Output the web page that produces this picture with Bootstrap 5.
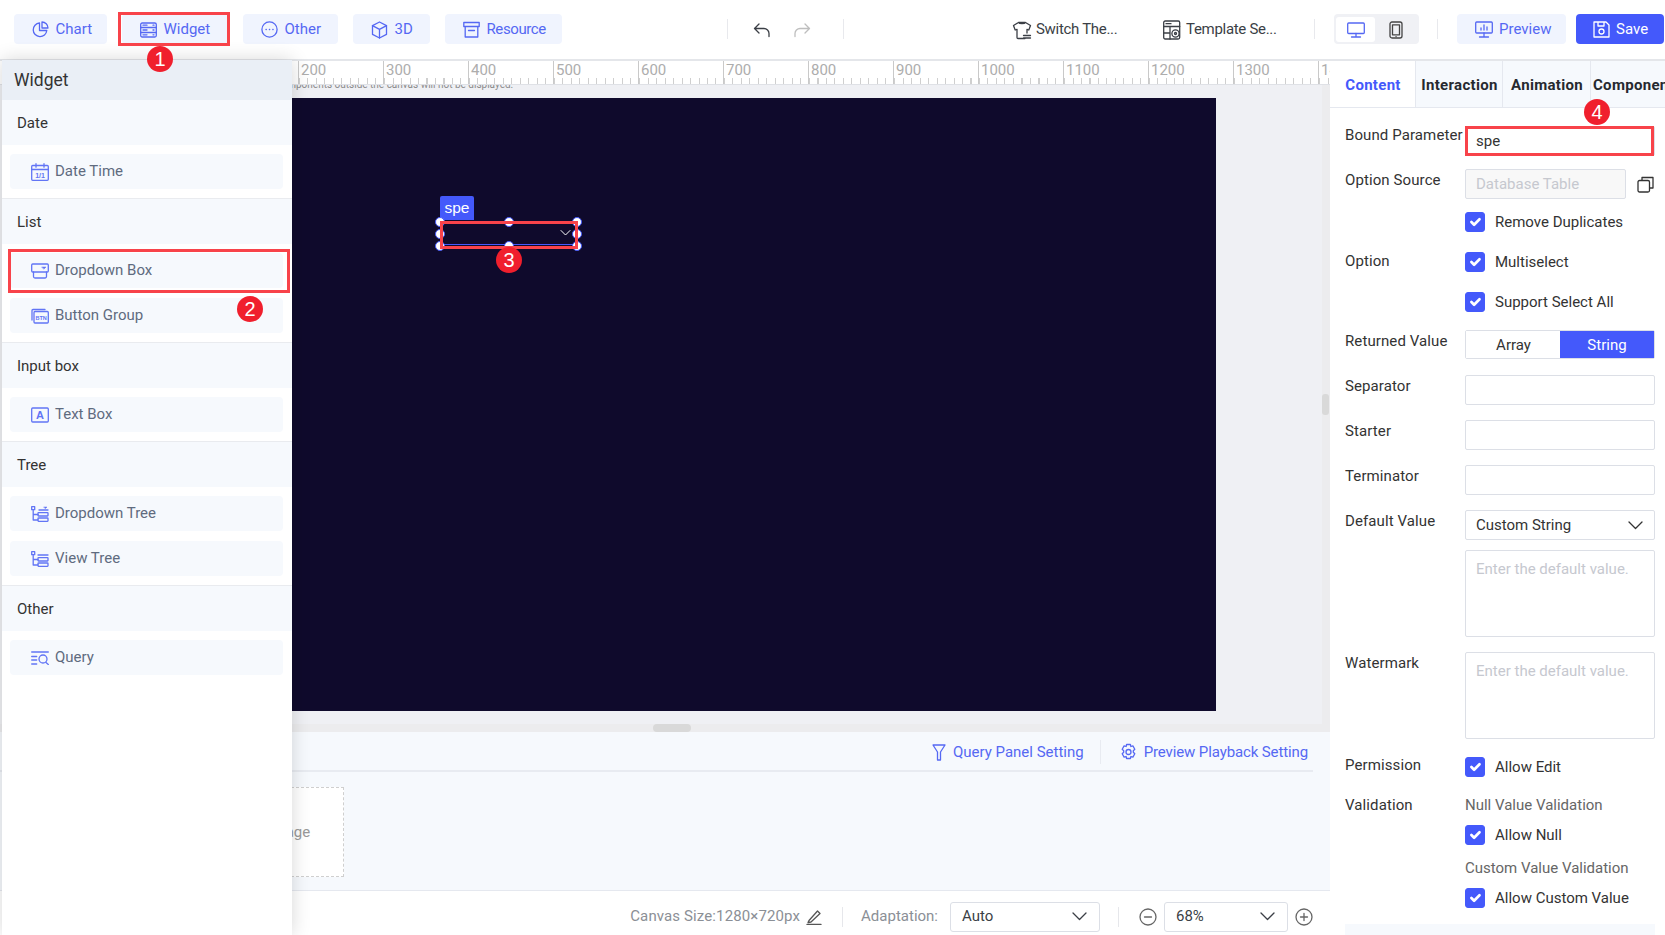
<!DOCTYPE html>
<html lang="en"><head><meta charset="utf-8"><title>Widget editor</title>
<link href="https://cdn.jsdelivr.net/npm/bootstrap@5.3.0/dist/css/bootstrap.min.css" rel="stylesheet">
<style>
html,body{margin:0;height:100%;overflow:hidden;background:#fff}
body{font-family:Roboto,"Liberation Sans",sans-serif;font-size:15px;color:#3b3f46}
svg{display:block;flex:none;fill:none;stroke:currentColor;stroke-width:1.3;stroke-linecap:round;stroke-linejoin:round}
svg text{fill:currentColor;stroke:none;font-family:"Liberation Sans",sans-serif;font-weight:700}
.ed-app{width:1665px;height:935px;position:relative;overflow:hidden}
.ed-top{height:61px;border-bottom:2px solid #e4e6ea;padding:14px 0 0 14px;background:#fff}
.ed-tb{height:30px;padding:1px 0 0 18px;background:#f0f4fe;border:0;border-radius:4px;color:#5568f3;display:flex;align-items:center;gap:6.5px;font-size:15px;white-space:nowrap}
.w-chart{width:93px}.w-widget{width:106px;margin-left:15px}.w-other{width:95px;margin-left:15px}.w-3d{width:77px;margin-left:15px}.w-res{width:117px;margin-left:15px;letter-spacing:-.4px}
.ed-sep{width:1px;height:20px;background:#e8e9ed;margin-top:5px;flex:none}
.m165{margin-left:165px}.m25{margin-left:25px}.m22{margin-left:22px}.m32{margin-left:32px}.m168{margin-left:168px}.m19{margin-left:19px}.m18{margin-left:18px}
.ed-ic{height:30px;padding-top:1px;display:flex;align-items:center;gap:5px;color:#3b3f46;white-space:nowrap;letter-spacing:-.3px;flex:none}
.ic-switch{width:151px;gap:4px}.ic-tpl{width:133px}
.ed-dev{width:85px;height:30px;background:#f0f1f5;border-radius:4px;padding:3px 2px;display:flex;flex:none}
.ed-dev span{width:40px;height:25px;border-radius:3px;display:flex;align-items:center;justify-content:center}
.ed-dev .on{background:#fff;color:#5568f3}.ed-dev .off{width:43px;color:#444}
.ed-prev{width:109px;padding-left:18px;gap:6px;flex:none}
.ed-save{width:88px;margin-left:10px;padding-left:17px;gap:6px;background:#4459fb;color:#fff;flex:none}
.ed-main{height:874px}
.ed-center{width:1330px;height:874px}
.ed-ruler{height:24px;flex:none;background:#fff;border-bottom:1px solid #dfe1e6;padding-left:128px;overflow:hidden}
.ed-cell{width:85px;flex:none;height:23px;border-left:1px solid #c9c9c9;color:#adadad;font-size:15px;line-height:19px;padding-left:2px;background:repeating-linear-gradient(90deg,#cfcfcf 0 1px,transparent 1px 8.5px) left bottom/100% 6px no-repeat}
.ed-stage{height:639px;background:#eff0f4;flex:none}
.ed-scroll{flex:1;overflow:hidden;position:relative}
.ed-note{height:19px;margin-top:-6px;margin-left:275px;font-size:10px;line-height:11px;color:#8a8a8a;white-space:nowrap}
.ed-canvas{width:1088px;height:613px;margin-left:128px;background:#0f0a2c;position:relative}
.ed-vbar{width:8px;background:#ececee;position:relative}
.ed-vthumb{width:7px;height:21px;background:#d9d9d9;border-radius:3px;margin-top:309px}
.ed-hbar{height:8px;background:#ececee;flex:none}
.ed-hthumb{width:38px;height:8px;background:#d9d9d9;border-radius:4px;margin-left:653px}
.ed-qp{height:159px;background:#f6f9fd;flex:none;border-bottom:1px solid #e5e8ef}
.ed-qhead{height:40px;margin-right:17px;border-bottom:2px solid #e8ebf1;padding:2px 5px 0 0;color:#5568f3;gap:7px;white-space:nowrap}
.ed-qsep{width:1px;height:24px;background:#e8ebf1;margin:0 12px 0 9px}
.ls-pp{letter-spacing:-.12px}
.ed-thumb{width:128px;height:90px;margin:15px 0 0 216px;padding-right:4px;background:#fff;border:1px dashed #cfcfcf;color:#999;display:flex;align-items:center;justify-content:center}
.ed-foot{height:44px;flex:none;padding:7px 17px 0 0;color:#8b8f96;background:#fff;white-space:nowrap}
.ed-fsep{width:1px;height:20px;background:#e6e7eb}
.fsep1{margin:0 18px 0 20px}.fsep2{margin:0 20px 0 18px}
.ed-cs{letter-spacing:.12px}
.ed-pen{margin-left:6px;color:#555}
.ed-fsel{height:30px;border:1px solid #dcdfe6;border-radius:3px;color:#3b3f46;padding:0 12px 0 11px;display:flex;align-items:center;justify-content:space-between;background:#fff}
.w150{width:150px;margin-left:12px}.w124{width:124px;margin:0 7px}
.ed-round{color:#666}
.ed-right{width:335px;height:874px;background:#fff;overflow:hidden}
.ed-tabs{height:47px;background:#f6f9fd;border-bottom:1px solid #e5e8ef;flex-wrap:nowrap;overflow:hidden}
.ed-tabs .nav-link{height:46px;padding:0 0 0 1px;font-weight:700;font-size:15px;letter-spacing:.3px;color:#26292f;line-height:48px;border-right:1px solid #e5e8ef;text-align:center;flex:none;white-space:nowrap}
.ed-tabs .nav-link.active{background:#fff;color:#4459fb}
.tab1{width:86px}.tab2{width:87px}.tab3{width:88px}.ed-tabs .nav-link.tab4{border:0;text-align:left;padding-left:2px;width:74px;overflow:hidden}
.ed-form{padding:18px 10px 0 15px}
.ed-row{display:flex}
.ed-lab{width:120px;flex:none;line-height:20px;padding-top:1px;color:#333;white-space:nowrap;letter-spacing:.1px}
.lab-a{padding-top:0;margin-top:-1px}.lab-b{padding-top:0;margin-top:-2px}.lab-c{padding-top:0}
.ed-ctl{width:190px;flex:none}
.ed-form .form-control{height:30px;border:1px solid #dcdfe6;border-radius:2px;font-size:15px;color:#333;padding:0 10px;box-shadow:none;min-height:0;background:#fff}
.ed-form .form-control::placeholder{color:#c6c8cf}
.ed-form .form-control:disabled{background:#f8f8f8}
.ed-form .ctl-src{width:161px;flex:none}
.ed-form textarea.form-control{height:87px;padding-top:8px;resize:none;line-height:20px}
.ed-sel{height:30px;border:1px solid #dcdfe6;border-radius:2px;padding:0 11px 0 10px;display:flex;align-items:center;justify-content:space-between;color:#333}
.ed-ck{display:flex;align-items:center;gap:10px;height:20px;min-height:0;color:#333;margin:0;padding:0;white-space:nowrap}
.ed-ck .form-check-input{width:20px;height:20px;margin:0;float:none;border-radius:3px;background-color:#4459fb;border-color:#4459fb;flex:none;opacity:1}
.ed-seg{height:29px;width:100%;border:1px solid #dcdfe6;border-radius:2px;display:flex}
.ed-seg .btn{font-size:15px;padding:0;border:0;border-radius:0;line-height:28px;color:#333;background:#fff}
.ed-seg .btn.seg-a{width:95px;flex:none}
.ed-seg .btn.active{background:#4459fb;color:#fff}
.mt13{margin-top:13px}.mt20{margin-top:20px}.mt18{margin-top:18px}.mt16{margin-top:16px}.mt15{margin-top:15px}.mt10{margin-top:10px}
.ed-note2{color:#666;line-height:20px;white-space:nowrap}
.ed-fill{height:11px;background:#f6f9fd;margin-top:16px;width:310px}
.ed-copy{width:26px;display:flex;justify-content:flex-end;align-items:center;color:#333;flex:none;margin-left:2px}
.ed-left{position:absolute;left:2px;top:60px;width:290px;height:875px;background:#fff;box-shadow:0 0 18px rgba(0,0,0,.16)}
.ed-lh{height:40px;line-height:40px;background:#eaeff6;padding-left:12px;font-size:17.5px;color:#333}
.ed-group{height:45px;line-height:47px;background:#f6f9fd;padding-left:15px;color:#333}
.ed-gwrap{padding:9px 9px 9px 8px;border-bottom:1px solid #e9ebef;display:flex;flex-direction:column;gap:10px}
.ed-gwrap:last-child{border-bottom:0}
.ed-item{height:35px;background:#f6f9fd;border-radius:4px;padding-left:21px;display:flex;align-items:center;gap:6px;color:#5f6b7f}
.ed-item svg{color:#6275f5}
.ed-wb{position:absolute;left:312px;top:98px;width:34px;height:24px;background:#4459fb;border-radius:2px 2px 0 0;color:#fff;text-align:center;line-height:24px;font-family:"Liberation Sans",sans-serif;font-size:15.5px}
.ed-sel-box{position:absolute;left:312px;top:123px;width:137px;height:24px;border-bottom:1px solid #4459fb;color:#fff}
.ed-sel-box svg{position:absolute;right:6px;top:8px;stroke-width:1}
.ed-hdl{position:absolute;width:10px;height:10px;border-radius:50%;background:#fff;border:1.5px solid #4459fb}
.h1x{left:307px}.h2x{left:376px}.h3x{left:444px}.h1y{top:119px}.h2y{top:131px}.h3y{top:143px}
.ed-red{position:absolute;border:3px solid #f8434a;pointer-events:none}
.red1{left:118px;top:12px;width:112px;height:34px}.red2{left:8px;top:249px;width:282px;height:44px}.red3{left:440px;top:221px;width:138px;height:28px}.red4{left:1465px;top:126px;width:189px;height:30px}
.ed-badge{position:absolute;width:26px;height:26px;border-radius:50%;background:#f01f2d;color:#fff;font-size:20px;line-height:26px;text-align:center;font-family:"Liberation Sans",sans-serif}
.b1{left:147px;top:46px}.b2{left:237px;top:296px}.b3{left:496px;top:247px}.b4{left:1584px;top:99px}
</style></head>
<body>
<div class="ed-app d-flex flex-column">
<header class="ed-top d-flex">
 <button class="ed-tb w-chart"><svg width="17" height="17" viewBox="0 0 17 17"><path d="M7.500 2a6.800 6.800 0 1 0 7.300 7.500H7.500z"/><path d="M10 1a6 6 0 0 1 6 6h-6z"/></svg>Chart</button>
 <button class="ed-tb w-widget"><svg width="17" height="16" viewBox="0 0 17 16"><rect x=".7" y="1" width="15.600" height="14" rx="1.500"/><path d="M.7 5.500h15.600M.7 10.500h15.600M3 3.200h4M3 8h4M3 12.800h4M13 3.200h1M13 8h1M13 12.800h1"/></svg>Widget</button>
 <button class="ed-tb w-other"><svg width="17" height="17" viewBox="0 0 17 17"><circle cx="8.500" cy="8.500" r="7.600"/><path d="M5 8.500h.3M8.400 8.500h.3M11.800 8.500h.3"/></svg>Other</button>
 <button class="ed-tb w-3d"><svg width="17" height="18" viewBox="0 0 17 18"><path d="M8.500 1l7 3.600v8.800l-7 3.600-7-3.600V4.600z"/><path d="M1.500 4.600l7 3.800 7-3.800M8.500 8.400V17"/></svg>3D</button>
 <button class="ed-tb w-res"><svg width="17" height="17" viewBox="0 0 17 17"><path d="M.8 1.500h15.400v4H.8zM2.200 5.500v10.500h12.600V5.500M5.500 9.500h6"/></svg>Resource</button>
 <span class="ed-sep m165"></span>
 <span class="ed-ic m25"><svg width="18" height="18" viewBox="0 0 18 18"><path d="M6 3L1.500 7.500 6 12M1.500 7.500H11a5 5 0 0 1 5 5v3"/></svg></span>
 <span class="ed-ic m22 text-black-50"><svg width="18" height="18" viewBox="0 0 18 18" opacity=".5"><path d="M12 3l4.500 4.500L12 12M16.500 7.500H7a5 5 0 0 0-5 5v3"/></svg></span>
 <span class="ed-sep m32"></span>
 <span class="ed-ic ic-switch m168"><svg width="20" height="20" viewBox="0 0 20 20" stroke-width="1.100"><path d="M6.500 2.500L1.500 5.500l1.700 4.500L5 9.300V17.500a1 1 0 0 0 1 1h7M13.500 2.500l5 3-1.700 4.500-1.800-.7v3.700M6.500 2.500c.8 1.600 6.200 1.600 7 0zM11.500 15.500h7M11.500 18h7"/></svg>Switch The...</span>
 <span class="ed-ic ic-tpl"><svg width="18" height="20" viewBox="0 0 18 20" stroke-width="1.100"><rect x=".7" y="1" width="16" height="18" rx="1.500"/><path d="M.7 6.500h16M.7 13h6M7 6.500V19M3 3.700h5"/><circle cx="12.500" cy="13.500" r="3.600" fill="#fff"/><circle cx="12.500" cy="13.500" r="1"/></svg>Template Se...</span>
 <span class="ed-sep m18"></span>
 <div class="ed-dev m19"><span class="on"><svg width="18" height="16" viewBox="0 0 18 16"><rect x=".7" y="1" width="16.600" height="10.500" rx="1"/><path d="M9 11.500V15M4.500 15h9"/></svg></span><span class="off"><svg width="14" height="18" viewBox="0 0 14 18" stroke-width="1.500"><rect x="1" y="1" width="12" height="16" rx="2"/><path d="M3.500 3.800h7v10h-7zM7 15.600h.1"/></svg></span></div>
 <span class="ed-sep m18"></span>
 <button class="ed-tb ed-prev m19"><svg width="18" height="17" viewBox="0 0 18 17"><rect x=".7" y="1" width="16.600" height="11" rx="1"/><path d="M9 12v4M4.500 16h9M6 9V7M9 9V4M12 9V6"/></svg>Preview</button>
 <button class="ed-tb ed-save"><svg width="17" height="17" viewBox="0 0 17 17"><path d="M1 1h12l3 3v12H1zM5 1v4h6V1"/><circle cx="8.500" cy="10.500" r="2.500"/></svg>Save</button>
</header>
<div class="ed-main d-flex">
 <div class="ed-center d-flex flex-column">
  <div class="ed-ruler d-flex"><div class="ed-cell">0</div><div class="ed-cell">100</div><div class="ed-cell">200</div><div class="ed-cell">300</div><div class="ed-cell">400</div><div class="ed-cell">500</div><div class="ed-cell">600</div><div class="ed-cell">700</div><div class="ed-cell">800</div><div class="ed-cell">900</div><div class="ed-cell">1000</div><div class="ed-cell">1100</div><div class="ed-cell">1200</div><div class="ed-cell">1300</div><div class="ed-cell">1400</div></div>
  <div class="ed-stage d-flex">
   <div class="ed-scroll">
    <div class="ed-note">Components outside the canvas will not be displayed.</div>
    <div class="ed-canvas">
     <div class="ed-wb">spe</div>
     <div class="ed-sel-box"><svg width="11" height="8" viewBox="0 0 11 8"><path d="M1 1.500l4.500 4.500L10 1.500"/></svg></div>
     <span class="ed-hdl h1x h1y"></span><span class="ed-hdl h2x h1y"></span><span class="ed-hdl h3x h1y"></span>
     <span class="ed-hdl h1x h2y"></span><span class="ed-hdl h3x h2y"></span>
     <span class="ed-hdl h1x h3y"></span><span class="ed-hdl h2x h3y"></span><span class="ed-hdl h3x h3y"></span>
    </div>
   </div>
   <div class="ed-vbar"><div class="ed-vthumb"></div></div>
  </div>
  <div class="ed-hbar"><div class="ed-hthumb"></div></div>
  <div class="ed-qp">
   <div class="ed-qhead d-flex align-items-center justify-content-end">
    <svg width="14" height="17" viewBox="0 0 14 17"><path d="M1 1h12L8.500 8v8h-3V8z"/></svg><span>Query Panel Setting</span>
    <span class="ed-qsep"></span>
    <svg width="17" height="18" viewBox="0 0 17 18"><path d="M6.600 1.500h3.800l.5 2 2-.6 1.900 3.300-1.500 1.500v1.600l1.500 1.500-1.900 3.300-2-.6-.5 2H6.600l-.5-2-2 .6-1.900-3.300 1.500-1.500V7.700L2.200 6.200l1.900-3.300 2 .6z"/><circle cx="8.500" cy="9" r="2.500"/></svg><span class="ls-pp">Preview Playback Setting</span>
   </div>
   <div class="ed-thumb">Add Page</div>
  </div>
  <div class="ed-foot d-flex align-items-center justify-content-end">
   <span class="ed-cs">Canvas Size:1280×720px</span>
   <svg class="ed-pen" width="16" height="16" viewBox="0 0 16 16"><path d="M3 11.500L11.500 2l2.500 2.500L5 13l-3 .5zM1 15.500h14"/></svg>
   <span class="ed-fsep fsep1"></span>
   <span>Adaptation:</span>
   <div class="ed-fsel w150"><span>Auto</span><svg width="15" height="9" viewBox="0 0 15 9"><path d="M1 1l6.500 6.500L14 1"/></svg></div>
   <span class="ed-fsep fsep2"></span>
   <svg class="ed-round" width="18" height="18" viewBox="0 0 18 18"><circle cx="9" cy="9" r="8"/><path d="M5.500 9h7"/></svg>
   <div class="ed-fsel w124"><span>68%</span><svg width="15" height="9" viewBox="0 0 15 9"><path d="M1 1l6.500 6.500L14 1"/></svg></div>
   <svg class="ed-round" width="18" height="18" viewBox="0 0 18 18"><circle cx="9" cy="9" r="8"/><path d="M5.500 9h7M9 5.500v7"/></svg>
  </div>
 </div>
 <aside class="ed-right">
  <nav class="nav ed-tabs">
   <a class="nav-link active tab1">Content</a><a class="nav-link tab2">Interaction</a><a class="nav-link tab3">Animation</a><a class="nav-link tab4">Component</a>
  </nav>
  <div class="ed-form">
   <div class="ed-row"><div class="ed-lab lab-a">Bound Parameter</div><div class="ed-ctl"><input class="form-control" value="spe"></div></div>
   <div class="ed-row mt13"><div class="ed-lab">Option Source</div><div class="d-flex ed-ctl"><input class="form-control ctl-src" disabled placeholder="Database Table"><div class="ed-copy"><svg width="17" height="17" viewBox="0 0 17 17"><path d="M5 4V1.500h11V12h-3"/><rect x="1" y="4.500" width="11.500" height="11.500" rx="1.500"/></svg></div></div></div>
   <div class="ed-row mt13"><div class="ed-lab"></div><label class="ed-ck form-check"><input class="form-check-input" type="checkbox" checked>Remove Duplicates</label></div>
   <div class="ed-row mt20"><div class="ed-lab lab-a">Option</div><label class="ed-ck form-check"><input class="form-check-input" type="checkbox" checked>Multiselect</label></div>
   <div class="ed-row mt20"><div class="ed-lab"></div><label class="ed-ck form-check"><input class="form-check-input" type="checkbox" checked>Support Select All</label></div>
   <div class="ed-row mt18"><div class="ed-lab">Returned Value</div><div class="ed-ctl"><div class="ed-seg btn-group"><button class="btn seg-a">Array</button><button class="btn active">String</button></div></div></div>
   <div class="ed-row mt16"><div class="ed-lab">Separator</div><div class="ed-ctl"><input class="form-control"></div></div>
   <div class="ed-row mt15"><div class="ed-lab">Starter</div><div class="ed-ctl"><input class="form-control"></div></div>
   <div class="ed-row mt15"><div class="ed-lab">Terminator</div><div class="ed-ctl"><input class="form-control"></div></div>
   <div class="ed-row mt15"><div class="ed-lab">Default Value</div><div class="ed-ctl"><div class="ed-sel"><span>Custom String</span><svg width="15" height="9" viewBox="0 0 15 9"><path d="M1 1l6.500 6.500L14 1"/></svg></div></div></div>
   <div class="ed-row mt10"><div class="ed-lab"></div><div class="ed-ctl"><textarea class="form-control" placeholder="Enter the default value."></textarea></div></div>
   <div class="ed-row mt15"><div class="ed-lab">Watermark</div><div class="ed-ctl"><textarea class="form-control" placeholder="Enter the default value."></textarea></div></div>
   <div class="ed-row mt18"><div class="ed-lab lab-b">Permission</div><label class="ed-ck form-check"><input class="form-check-input" type="checkbox" checked>Allow Edit</label></div>
   <div class="ed-row mt18"><div class="ed-lab lab-c">Validation</div><div class="ed-note2">Null Value Validation</div></div>
   <div class="ed-row mt10"><div class="ed-lab"></div><label class="ed-ck form-check"><input class="form-check-input" type="checkbox" checked>Allow Null</label></div>
   <div class="ed-row mt13"><div class="ed-lab"></div><div class="ed-note2">Custom Value Validation</div></div>
   <div class="ed-row mt10"><div class="ed-lab"></div><label class="ed-ck form-check"><input class="form-check-input" type="checkbox" checked>Allow Custom Value</label></div>
   <div class="ed-fill"></div>
  </div>
 </aside>
</div>
<aside class="ed-left">
 <div class="ed-lh">Widget</div>
 <div class="ed-group">Date</div>
 <div class="ed-gwrap"><div class="ed-item"><svg width="18" height="18" viewBox="0 0 18 18"><rect x=".7" y="2.500" width="16.600" height="14.800" rx="1"/><path d="M.7 6.500h16.600M5 .7v3.500M13 .7v3.500"/><text x="9" y="14.500" font-size="7" text-anchor="middle">1/1</text></svg>Date Time</div></div>
 <div class="ed-group">List</div>
 <div class="ed-gwrap"><div class="ed-item"><svg width="18" height="16" viewBox="0 0 18 16"><rect x=".7" y="1" width="16.600" height="8" rx="1"/><path d="M2.500 9v4.500a1.500 1.500 0 0 0 1.500 1.500h10a1.500 1.500 0 0 0 1.500-1.500V9"/><path d="M11 4h4l-2 2z" fill="currentColor" stroke-width=".5"/></svg>Dropdown Box</div><div class="ed-item"><svg width="18" height="16" viewBox="0 0 18 16"><path d="M1 12V2.500a1 1 0 0 1 1-1h12"/><rect x="3" y="3.500" width="14.300" height="11.500" rx="1"/><text x="10.200" y="11.600" font-size="5.500" text-anchor="middle">BTN</text></svg>Button Group</div></div>
 <div class="ed-group">Input box</div>
 <div class="ed-gwrap"><div class="ed-item"><svg width="18" height="16" viewBox="0 0 18 16"><rect x=".7" y="1" width="16.600" height="14" rx="1"/><text x="9" y="12" font-size="11" text-anchor="middle" font-weight="400">A</text></svg>Text Box</div></div>
 <div class="ed-group">Tree</div>
 <div class="ed-gwrap"><div class="ed-item"><svg width="18" height="16" viewBox="0 0 18 16"><rect x=".7" y=".7" width="3" height="3"/><path d="M2.200 3.700V14H7M2.200 8.500H7M8 4h9"/><path d="M13 1h3l-1.500 1.500z" fill="currentColor" stroke-width=".5"/><rect x="7" y="6.700" width="10" height="3.300" rx=".5"/><rect x="7" y="12" width="10" height="3.300" rx=".5"/></svg>Dropdown Tree</div><div class="ed-item"><svg width="18" height="16" viewBox="0 0 18 16"><rect x=".7" y=".7" width="3" height="3"/><path d="M2.200 3.700V14H7M2.200 8.500H7M7 4h10"/><rect x="7" y="6.700" width="10" height="3.300" rx=".5"/><rect x="7" y="12" width="10" height="3.300" rx=".5"/></svg>View Tree</div></div>
 <div class="ed-group">Other</div>
 <div class="ed-gwrap"><div class="ed-item"><svg width="18" height="14" viewBox="0 0 18 14"><path d="M.7 1h16.600M.7 5.500h5M.7 9h5M.7 13h5M15 11.500l2.300 2"/><circle cx="12" cy="8" r="4"/></svg>Query</div></div>
</aside>
<div class="ed-red red1"></div>
<div class="ed-red red2"></div>
<div class="ed-red red3"></div>
<div class="ed-red red4"></div>
<div class="ed-badge b1">1</div>
<div class="ed-badge b2">2</div>
<div class="ed-badge b3">3</div>
<div class="ed-badge b4">4</div>
</div>
<script src="https://cdn.jsdelivr.net/npm/bootstrap@5.3.0/dist/js/bootstrap.bundle.min.js"></script>
</body></html>
